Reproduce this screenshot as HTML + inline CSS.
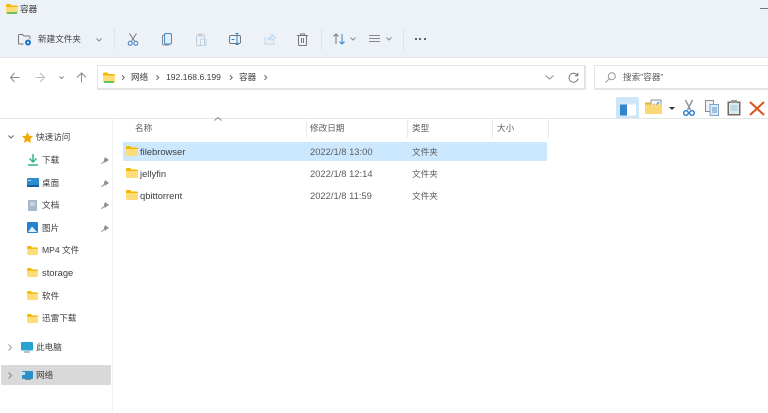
<!DOCTYPE html>
<html lang="zh"><head><meta charset="utf-8"><title>容器</title>
<style>
html,body{margin:0;padding:0;width:768px;height:413px;overflow:hidden;background:#fff}
body{position:relative;font-family:"Liberation Sans","Noto Sans CJK SC",sans-serif;color:#333}
.t{position:absolute;white-space:nowrap;font-size:8.6px;line-height:12px;color:#3c3c3c;filter:blur(.35px)}
.l{font-size:9.4px}
.g{color:#5c5c5c}
.a{position:absolute}
svg{position:absolute;overflow:visible;filter:blur(.3px)}
</style></head><body>
<svg width="0" height="0" style="position:absolute"><defs>
<symbol id="f" viewBox="0 0 12 10"><path d="M0 1.200C0 .5.500 0 1.200 0h3l1.300 1.500h5.300c.7 0 1.200.5 1.200 1.200V3.500H0z" fill="#f5b700"/><path d="M0 3h12v5.800c0 .7-.5 1.200-1.200 1.200H1.200C.5 10 0 9.500 0 8.800z" fill="#ffdc7a"/></symbol>
</defs></svg>

<div class="a" style="left:0;top:0;width:768px;height:57px;background:#edf2f9"></div>
<div class="a" style="left:0;top:57px;width:768px;height:1px;background:#e0e3e8"></div>
<div class="a" style="left:760px;top:8px;width:8px;height:1px;background:#777"></div>

<svg style="left:6px;top:4px" width="12" height="10"><use href="#f" width="12" height="10"/><rect x="1" y="8" width="10" height="2" fill="#5fc65f"/></svg>
<div class="t" style="left:20px;top:3px;color:#333">容器</div>

<!-- toolbar -->
<svg style="left:18px;top:33px" width="14" height="13" fill="none" stroke="#777"><path d="M.5 10V2.500c0-.6.400-1 1-1h3l1.500 1.500h5c.6 0 1 .4 1 1v2M.5 10c0 .6.400 1 1 1h4"/><circle cx="10" cy="9.500" r="3" fill="#1976c8" stroke="none"/><circle cx="10" cy="9.500" r="1" fill="#fff" stroke="none"/></svg>
<div class="t" style="left:38px;top:33px">新建文件夹</div>
<svg style="left:96px;top:38px" width="6" height="4" fill="none" stroke="#888"><path d="M.5.500 3 3 5.500.500"/></svg>
<div class="a" style="left:114px;top:28px;width:1px;height:22px;background:#dfe3e8"></div>

<svg style="left:128px;top:33px" width="10" height="13" fill="none" stroke="#777"><path d="M1.500.5 6.500 8M8.500.5 3.500 8"/><circle cx="2.200" cy="10.300" r="2" stroke="#3a7fc4"/><circle cx="7.800" cy="10.300" r="2" stroke="#3a7fc4"/></svg>
<svg style="left:162px;top:33px" width="11" height="13" fill="none"><rect x=".5" y="2" width="7" height="10" rx="1.500" stroke="#888"/><rect x="2.500" y=".5" width="7" height="10.500" rx="1.500" stroke="#3a8ad6" fill="#e3effa"/></svg>
<svg style="left:196px;top:33px" width="11" height="13" fill="none" stroke="#c4ccd4"><rect x=".5" y="2" width="8" height="10.500" rx="1"/><rect x="3" y="1" width="3" height="2"/><rect x="4.500" y="6" width="5.500" height="6.500" rx="1" stroke="#b8d6ef"/></svg>
<svg style="left:229px;top:33px" width="12" height="12" fill="none" stroke="#777"><rect x=".5" y="2.500" width="11" height="8" rx="1.500"/><path d="M8 .5v11M6.500.5h3M6.500 11.500h3" stroke="#2f84cf"/><path d="M2.500 6.500h3" stroke="#2f84cf"/></svg>
<svg style="left:264px;top:33px" width="12" height="12" fill="none" stroke="#c6ced6"><path d="M1 4v7h9V8"/><path d="M4 7c0-2 2-3.500 4-3.500V1.500l3.500 3L8 7.500V5.500C6.500 5.500 5 6 4 7z" stroke="#b8d6ef"/></svg>
<svg style="left:297px;top:33px" width="11" height="13" fill="none" stroke="#777"><path d="M0 2.500h11M3.500 2.500V1h4v1.500M1.500 2.500v9c0 .6.400 1 1 1h6c.6 0 1-.4 1-1v-9M4.500 5v5M6.500 5v5"/></svg>
<div class="a" style="left:321px;top:28px;width:1px;height:22px;background:#dfe3e8"></div>

<svg style="left:333px;top:33px" width="13" height="12" fill="none"><path d="M3 11V1M.5 3.500 3 1l2.500 2.500" stroke="#777"/><path d="M9 1v10M6.500 8.500 9 11l2.500-2.500" stroke="#2f84cf"/></svg>
<svg style="left:350px;top:37px" width="6" height="4" fill="none" stroke="#888"><path d="M.5.500 3 3 5.500.500"/></svg>
<div class="a" style="left:369px;top:35px;width:11px;height:7px;border-top:1px solid #888;border-bottom:1px solid #888;box-sizing:border-box"></div>
<div class="a" style="left:369px;top:38px;width:11px;height:1px;background:#888"></div>
<svg style="left:386px;top:37px" width="6" height="4" fill="none" stroke="#888"><path d="M.5.500 3 3 5.500.500"/></svg>
<div class="a" style="left:403px;top:28px;width:1px;height:22px;background:#dfe3e8"></div>
<div class="a" style="left:415px;top:38px;width:2px;height:2px;background:#333;border-radius:50%"></div>
<div class="a" style="left:419px;top:38px;width:2px;height:2px;background:#333;border-radius:50%"></div>
<div class="a" style="left:424px;top:38px;width:2px;height:2px;background:#333;border-radius:50%"></div>

<!-- nav -->
<svg style="left:10px;top:72px" width="99" height="11" fill="none" stroke="#8a8a8a"><path d="M.5 5.500h9M4.500 1 .5 5.500 4.500 10"/><path d="M25.500 5.500h9M30 1l4.500 4.500L30 10" stroke="#bdbdbd"/><path d="M49.500 4.500 51.500 6.500 53.500 4.500"/><path d="M71.500 10.500v-9M67 5.500l4.500-4.500L76 5.500"/></svg>

<div class="a" style="left:97px;top:65px;width:489px;height:25px;box-sizing:border-box;border:1px solid #e4e4e4;border-right-width:2px;border-bottom-width:2px;background:#fff"></div>
<svg style="left:103px;top:72px" width="12" height="11"><use href="#f" width="12" height="11"/><rect x="1" y="9" width="10" height="2" fill="#5fc65f"/></svg>
<div class="t" style="left:131px;top:71px">网络</div>
<div class="t" style="left:166px;top:71px">192.168.6.199</div>
<div class="t" style="left:239px;top:71px">容器</div>
<svg style="left:121px;top:74px" width="147" height="7" fill="none" stroke="#666"><path d="M1 1.200 3.200 3.500 1 5.800M35.500 1.200l2.200 2.300-2.200 2.300M109 1.200l2.200 2.300-2.200 2.300M143.500 1.200l2.200 2.300-2.200 2.300"/></svg>
<svg style="left:545px;top:75px" width="9" height="5" fill="none" stroke="#888"><path d="M.5.500 4.500 4 8.500.500"/></svg>
<svg style="left:568px;top:72px" width="11" height="11" fill="none" stroke="#777"><path d="M9.500 3.500A4.500 4.500 0 1 0 10 6.500M9.800.8v3h-3"/></svg>

<div class="a" style="left:594px;top:65px;width:174px;height:25px;box-sizing:border-box;border:1px solid #e4e4e4;border-right:0;border-bottom-width:2px;background:#fff"></div>
<svg style="left:605px;top:72px" width="11" height="11" fill="none" stroke="#999"><circle cx="6.800" cy="4.200" r="3.500"/><path d="M4.200 6.800.5 10.500"/></svg>
<div class="t g" style="left:623px;top:71px">搜索"容器"</div>

<!-- mini toolbar -->
<div class="a" style="left:616px;top:97px;width:23px;height:22px;background:#cce6fb;border-radius:2px"></div>
<svg style="left:620px;top:103px" width="16" height="13"><rect width="16" height="13" fill="#dfe6ec"/><rect x="0" y="1.500" width="7" height="11" fill="#2f86cf"/><rect x="7" y="1.500" width="9" height="11" fill="#fff"/></svg>
<svg style="left:645px;top:100px" width="17" height="14"><rect x="6" y="0" width="10" height="8" fill="#f4f6f8" stroke="#777" stroke-width=".8"/><path d="M8.500 4l2 2 3.500-4" stroke="#2f86cf" stroke-width="1.200" fill="none"/><path d="M0 2.500h5l1 2h11V14H0z" fill="#fbd777"/><path d="M0 2.500h5l1 2h-6z" fill="#e6b23c"/></svg>
<div class="a" style="left:669px;top:107px;border:3px solid transparent;border-top:3px solid #333;border-bottom:0"></div>
<svg style="left:683px;top:100px" width="12" height="17" fill="none"><path d="M2.500 0 7.500 10M9.500 0 4.500 10" stroke="#8a98a5" stroke-width="1.500"/><circle cx="3" cy="13" r="2.300" stroke="#1e78c8" stroke-width="1.400"/><circle cx="9" cy="13" r="2.300" stroke="#1e78c8" stroke-width="1.400"/></svg>
<svg style="left:705px;top:100px" width="14" height="16"><rect x=".5" y=".5" width="8" height="11" fill="#eef1f4" stroke="#8a8f96"/><rect x="5" y="4.500" width="8.500" height="11" fill="#dcecf9" stroke="#7fa6c8"/><path d="M7 8h5M7 10h5M7 12h5" stroke="#5c93c4"/></svg>
<svg style="left:727px;top:100px" width="14" height="16"><rect x=".5" y="1.500" width="13" height="14" fill="#7a6a58"/><rect x="2" y="3" width="10" height="11" fill="#d8ecf6"/><rect x="4" y="0" width="6" height="3" fill="#999"/><path d="M3.500 6h7M3.500 8h7M3.500 10h7" stroke="#9fc3d8"/></svg>
<svg style="left:749px;top:101px" width="16" height="15" fill="none" stroke="#d9541e" stroke-width="2"><path d="M1 1l14 13M15 1 1 14"/></svg>

<!-- sidebar & header lines -->
<div class="a" style="left:0;top:118px;width:768px;height:1px;background:#e5e5e5"></div>
<div class="a" style="left:112px;top:119px;width:1px;height:294px;background:#f2f2f2"></div>
<svg style="left:214px;top:117px" width="8" height="4" fill="none" stroke="#888"><path d="M.5 3.500 4 .5l3.500 3"/></svg>
<div class="a" style="left:306px;top:119px;width:1px;height:19px;background:#ececec"></div>
<div class="a" style="left:407px;top:119px;width:1px;height:19px;background:#ececec"></div>
<div class="a" style="left:492px;top:119px;width:1px;height:19px;background:#ececec"></div>
<div class="a" style="left:548px;top:119px;width:1px;height:19px;background:#ececec"></div>
<div class="t g" style="left:135px;top:122px">名称</div>
<div class="t g" style="left:310px;top:122px">修改日期</div>
<div class="t g" style="left:412px;top:122px">类型</div>
<div class="t g" style="left:497px;top:122px">大小</div>

<div class="a" style="left:123px;top:142px;width:424px;height:19px;background:#cce8ff;border-radius:1px"></div>

<svg style="left:126px;top:146px" width="12" height="10"><use href="#f" width="12" height="10"/></svg>
<svg style="left:126px;top:168px" width="12" height="10"><use href="#f" width="12" height="10"/></svg>
<svg style="left:126px;top:190px" width="12" height="10"><use href="#f" width="12" height="10"/></svg>
<div class="t l" style="left:140px;top:146px">filebrowser</div>
<div class="t l" style="left:140px;top:168px">jellyfin</div>
<div class="t l" style="left:140px;top:190px">qbittorrent</div>
<div class="t g l" style="left:310px;top:146px">2022/1/8 13:00</div>
<div class="t g l" style="left:310px;top:168px">2022/1/8 12:14</div>
<div class="t g l" style="left:310px;top:190px">2022/1/8 11:59</div>
<div class="t g" style="left:412px;top:146px">文件夹</div>
<div class="t g" style="left:412px;top:168px">文件夹</div>
<div class="t g" style="left:412px;top:190px">文件夹</div>

<!-- sidebar -->
<svg style="left:8px;top:135px" width="6" height="4" fill="none" stroke="#666"><path d="M.5.500 3 3 5.500.500"/></svg>
<svg style="left:22px;top:132px" width="11" height="11"><path d="M5.500 0 7.200 3.700 11 4.200 8.200 6.900 8.900 11 5.500 9 2.100 11 2.800 6.900 0 4.200 3.800 3.700z" fill="#f5a800"/></svg>
<div class="t" style="left:36px;top:131px">快速访问</div>

<svg style="left:28px;top:154px" width="10" height="12" fill="none" stroke="#2fb58a" stroke-width="1.500"><path d="M5 0v7.500M1.500 4.500 5 8l3.500-3.500M0 11h10"/></svg>
<div class="t" style="left:42px;top:154px">下载</div>
<svg style="left:27px;top:178px" width="12" height="10"><rect width="12" height="9" rx="1" fill="#2a8ccc"/><rect x="1" y="2" width="3" height="1" fill="#bfe0f5"/><rect y="7" width="12" height="2" fill="#155f9c"/></svg>
<div class="t" style="left:42px;top:177px">桌面</div>
<svg style="left:28px;top:200px" width="9" height="11"><rect width="9" height="11" fill="#a9b8c8"/><path d="M2 3h5M2 5h5" stroke="#e8eef4"/></svg>
<div class="t" style="left:42px;top:199px">文档</div>
<svg style="left:27px;top:222px" width="11" height="11"><rect width="11" height="11" rx="1" fill="#2383d0"/><path d="M1 10 5 4.500 10 10z" fill="#dff0fb"/></svg>
<div class="t" style="left:42px;top:222px">图片</div>
<svg style="left:101px;top:157px" width="8" height="7" fill="#8f8f8f"><path d="M4 0 8 3 5.500 4.500 4 6 2.800 3.500z"/><path d="M3.200 4.500.5 6.800" stroke="#8f8f8f"/></svg>
<svg style="left:101px;top:180px" width="8" height="7" fill="#8f8f8f"><path d="M4 0 8 3 5.500 4.500 4 6 2.800 3.500z"/><path d="M3.200 4.500.5 6.800" stroke="#8f8f8f"/></svg>
<svg style="left:101px;top:202px" width="8" height="7" fill="#8f8f8f"><path d="M4 0 8 3 5.500 4.500 4 6 2.800 3.500z"/><path d="M3.200 4.500.5 6.800" stroke="#8f8f8f"/></svg>
<svg style="left:101px;top:225px" width="8" height="7" fill="#8f8f8f"><path d="M4 0 8 3 5.500 4.500 4 6 2.800 3.500z"/><path d="M3.200 4.500.5 6.800" stroke="#8f8f8f"/></svg>

<svg style="left:27px;top:246px" width="11" height="9"><use href="#f" width="11" height="9"/></svg>
<div class="t" style="left:42px;top:244px">MP4 文件</div>
<svg style="left:27px;top:268px" width="11" height="9"><use href="#f" width="11" height="9"/></svg>
<div class="t l" style="left:42px;top:267px">storage</div>
<svg style="left:27px;top:291px" width="11" height="9"><use href="#f" width="11" height="9"/></svg>
<div class="t" style="left:42px;top:290px">软件</div>
<svg style="left:27px;top:314px" width="11" height="9"><use href="#f" width="11" height="9"/></svg>
<div class="t" style="left:42px;top:312px">迅雷下载</div>

<svg style="left:8px;top:344px" width="4" height="7" fill="none" stroke="#999"><path d="M.5.500 3.500 3.500.5 6.500"/></svg>
<svg style="left:21px;top:342px" width="12" height="11"><rect width="12" height="8.500" rx="1" fill="#25a5cf"/><rect x="3" y="9.500" width="6" height="1" fill="#7c8a96"/></svg>
<div class="t" style="left:36px;top:341px">此电脑</div>

<div class="a" style="left:1px;top:365px;width:110px;height:20px;background:#d9d9d9;border-radius:1px"></div>
<svg style="left:8px;top:372px" width="4" height="7" fill="none" stroke="#888"><path d="M.5.500 3.500 3.500.5 6.500"/></svg>
<svg style="left:21px;top:370px" width="12" height="11"><rect x="1" y="1" width="11" height="8" rx="1" fill="#2a8fc8"/><rect x="4" y="9" width="6" height="1" fill="#7c8a96"/><path d="M0 2h4v3H0z" fill="#bfe4f7"/></svg>
<div class="t" style="left:36px;top:369px">网络</div>
</body></html>
